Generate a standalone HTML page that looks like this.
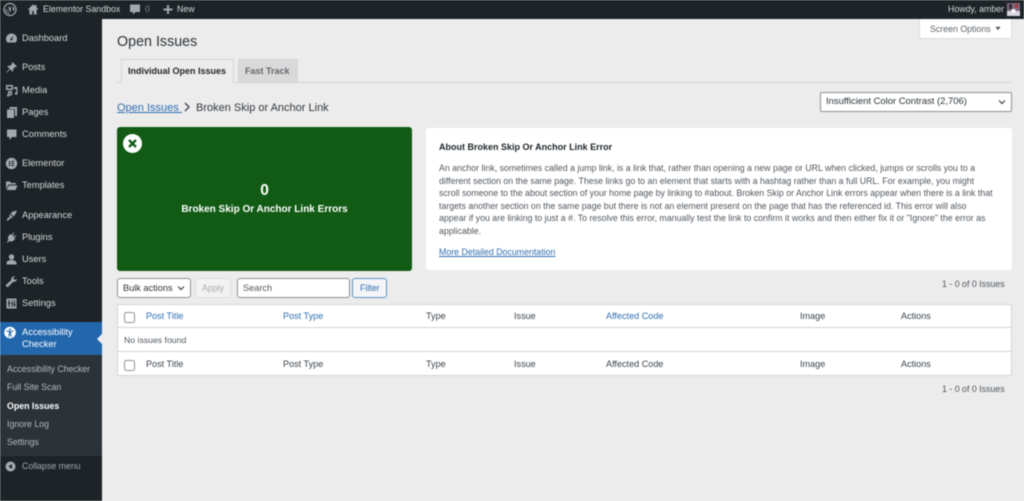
<!DOCTYPE html>
<html lang="en"><head><meta charset="utf-8"><title>Open Issues</title>
<style>
html,body{margin:0;padding:0;width:1024px;height:501px;overflow:hidden;background:#ececec;font-family:"Liberation Sans",sans-serif;font-size:9px;color:#3c434a}
#w{position:absolute;left:0;top:0;width:1024px;height:501px;overflow:hidden;filter:blur(.4px)}
.t{position:absolute;white-space:nowrap;line-height:12px}
.b{position:absolute;box-sizing:border-box}
.m{color:#d5d8da;font-size:9.3px;left:22px}
.s{color:#b4b9be;font-size:8.8px;left:7px}
.i{position:absolute;left:5px;width:13px;height:13px;fill:#a4a9ae}
.bar{color:#d5d8da;font-size:8.8px}
.th{font-size:9.1px;color:#3c434a}
.link{color:#2f6eb0}
p{margin:0}
</style></head><body><div id="w">
<div class="b" style="left:0;top:0;width:1024px;height:19px;background:#1d2327"></div>
<div class="b" style="left:0;top:19px;width:102px;height:482px;background:#1d2327"></div>
<div class="b" style="left:0;top:355px;width:102px;height:101px;background:#2c3338"></div>

<!-- admin bar -->
<svg class="b" style="left:3px;top:2px;width:14px;height:15px" viewBox="0 0 14 14"><circle cx="7" cy="7" r="6" fill="none" stroke="#a4a9ae" stroke-width="1.2"/><path d="M3 4.500h3l-.5.500 1.600 5 1-3-.8-2.200-.5-.3h3L9.400 5l1.100 4.300.8-2.300c.3-1-.1-2-.9-2.700L3 4.500zM2.500 5.500l2.400 6.200-2.400-3zM4 5l2.300 6.800L5.500 12z" fill="#a4a9ae"/></svg>
<svg class="b" style="left:27px;top:3px;width:12px;height:13px" viewBox="0 0 12 12"><path d="M6 1 .8 6h1.600v5h2.800V7.600h1.600V11h2.800V6h1.600L9.500 3.600V1.500H8v.7z" fill="#a4a9ae"/></svg>
<div class="t bar" style="left:43px;top:3px">Elementor Sandbox</div>
<svg class="b" style="left:129px;top:3px;width:12px;height:13px" viewBox="0 0 12 12"><path d="M1 1h10v7.500H6.500L4 11V8.500H1z" fill="#a4a9ae"/></svg>
<div class="t" style="left:145px;top:3px;color:#7f8589;font-size:8.800px">0</div>
<svg class="b" style="left:162px;top:3px;width:12px;height:13px" viewBox="0 0 12 12"><path d="M5 1.500h2V5h3.500v2H7v3.500H5V7H1.500V5H5z" fill="#a4a9ae"/></svg>
<div class="t bar" style="left:177px;top:3px">New</div>
<div class="t bar" style="left:948px;top:3px">Howdy, amber</div>
<svg class="b" style="left:1007px;top:3px;width:13px;height:13px" viewBox="0 0 13 13"><rect width="13" height="13" fill="#7c6a80"/><rect y="8" width="13" height="5" fill="#d8d4de"/><rect x="2" y="1" width="3" height="5" fill="#3a2a3a"/><rect x="8" y="1" width="3" height="4" fill="#a03a4a"/><circle cx="6.500" cy="8" r="2" fill="#fff"/></svg>

<!-- side menu -->
<svg class="i" style="top:32px" viewBox="0 0 13 13"><path d="M6.500 1.500a5.500 5.500 0 0 0-5 7.800l1 1.200h8l1-1.200a5.500 5.500 0 0 0-5-7.800zM6 6.500 8.500 3.800 7.300 7.300a1 1 0 1 1-1.300-.8z"/></svg>
<div class="t m" style="top:32px">Dashboard</div>
<svg class="i" style="top:61px" viewBox="0 0 13 13"><path d="M7.500 1 12 5.500l-1 .6-.7-.3L8 8.200c.4 1 .3 1.800-.3 2.500L5.300 8.300 2 11.500l-.8.300.3-.8L4.700 7.700 2.300 5.300c.7-.6 1.500-.7 2.500-.3l2.400-2.300-.3-.7z"/></svg>
<div class="t m" style="top:61px">Posts</div>
<svg class="i" style="top:84px" viewBox="0 0 13 13"><path d="M1 1h7v5H1zM2.500 2.500v2h4v-2zM9 3h3.500v6.500a1.300 1.300 0 1 1-1.200-1.300V5H9zM3 7h4v3.500a1.200 1.200 0 1 1-1.200-1.200V8.500H4.300v3a1.200 1.200 0 1 1-1.300-1.200z"/></svg>
<div class="t m" style="top:84px">Media</div>
<svg class="i" style="top:106px" viewBox="0 0 13 13"><path d="M4.500 1H12v9H10V3H4.500zM2 3.500h7v8.500H2z"/></svg>
<div class="t m" style="top:106px">Pages</div>
<svg class="i" style="top:128px" viewBox="0 0 13 13"><path d="M2 1.500h9.500v7.500H7l-2.500 3V9H2z"/></svg>
<div class="t m" style="top:128px">Comments</div>
<svg class="i" style="top:157px" viewBox="0 0 13 13"><path fill-rule="evenodd" d="M6.500.8a5.700 5.700 0 1 1 0 11.400 5.700 5.700 0 0 1 0-11.400zM4 4v5h1V4zm2.200 0v1h3V4zm0 2v1h3V6zm0 2v1h3V8z"/></svg>
<div class="t m" style="top:157px">Elementor</div>
<svg class="i" style="top:179px" viewBox="0 0 13 13"><path d="M1 2.500h4l1 1.500h5v1.500H3.500L1 10zM4 6.500h8.500L10.500 11H1.500z"/></svg>
<div class="t m" style="top:179px">Templates</div>
<svg class="i" style="top:209px" viewBox="0 0 13 13"><path d="M12 1.500 8 2.500 5.500 4.500 8.500 7.500 10.500 5zM4.800 5.200 7.800 8.200 6.800 9.200 5.800 8.700 4 11l-2.500 1 1-2.500 2.300-1.800-.5-1z"/></svg>
<div class="t m" style="top:209px">Appearance</div>
<svg class="i" style="top:231px" viewBox="0 0 13 13"><path d="M8.500 1.500 7 4 5.500 3l-2 2c-.8 1-.8 2.500 0 3.500L1.500 12l3.500-2c1 .7 2.300.6 3.300-.2l2-2L9 6.500 11.500 5 10.700 4.200 8.600 5.500 7.800 4.800 9.300 2.300z"/></svg>
<div class="t m" style="top:231px">Plugins</div>
<svg class="i" style="top:253px" viewBox="0 0 13 13"><circle cx="6.500" cy="4" r="2.700"/><path d="M1.500 11.500V10c0-1.800 2.500-3 5-3s5 1.200 5 3v1.500z"/></svg>
<div class="t m" style="top:253px">Users</div>
<svg class="i" style="top:275px" viewBox="0 0 13 13"><path d="M12 3.500c0 2-1.700 3.700-3.800 3.300L3 12l-2-.5L.8 10l5.400-4.700C5.800 3 7.800 1 10 1.200L8.300 3 9 4.500l1.500.5z"/></svg>
<div class="t m" style="top:275px">Tools</div>
<svg class="i" style="top:297px" viewBox="0 0 13 13"><path fill-rule="evenodd" d="M1.500 1.500h10v10h-10zM3.500 3v2.500H3V7h.5v3h1V7H5V5.500h-.5V3zM6 5v1.500h.5v3.500h1V6.500H8V5zM9 3v4h-.5v1.500H9V10h1V8.500h.5V7H10V3zM6.500 3v1h1V3z"/></svg>
<div class="t m" style="top:297px">Settings</div>

<div class="b" style="left:0;top:322px;width:102px;height:33px;background:#2267ac"></div>
<svg class="b" style="left:97px;top:334px;width:5px;height:10px" viewBox="0 0 5 10"><path d="M5 0v10L0 5z" fill="#ececec"/></svg>
<svg class="b" style="left:4px;top:326px;width:12px;height:13px" viewBox="0 0 12 12"><path fill-rule="evenodd" d="M6 .2a5.800 5.800 0 1 1 0 11.600A5.800 5.800 0 0 1 6 .2zM6 2a1 1 0 1 0 0 2 1 1 0 0 0 0-2zM2.500 4v1l2.500.6v1.400L4 10.200l1 .3L6 7.500l1 3 1-.3-1-3.200V5.600L9.500 5V4L6 4.600z" fill="#fff"/></svg>
<div class="t m" style="top:326px;color:#fff">Accessibility</div>
<div class="t m" style="top:338px;color:#fff">Checker</div>

<div class="t s" style="top:363px">Accessibility Checker</div>
<div class="t s" style="top:381px">Full Site Scan</div>
<div class="t s" style="top:400px;color:#fff;font-weight:bold">Open Issues</div>
<div class="t s" style="top:418px">Ignore Log</div>
<div class="t s" style="top:436px">Settings</div>
<svg class="b" style="left:5px;top:461px;width:11px;height:11px" viewBox="0 0 11 11"><circle cx="5.500" cy="5.500" r="5" fill="#a4a9ae"/><path d="M7 3v5L3.500 5.500z" fill="#1d2327"/></svg>
<div class="t s" style="left:22px;top:460px;color:#a4a9ae">Collapse menu</div>

<!-- main -->
<div class="t" style="left:117px;top:33px;font-size:14.300px;line-height:18px;color:#2c3338">Open Issues</div>
<div class="b" style="left:919px;top:19px;width:93px;height:20px;background:#fff;border:1px solid #dcdcde;border-top:0;border-radius:0 0 3px 3px"></div>
<div class="t" style="left:930px;top:23px;font-size:8.800px;color:#5d6368">Screen Options</div>
<svg class="b" style="left:995px;top:26px;width:6px;height:5px" viewBox="0 0 7 5"><path d="M.5.500h6L3.500 4.500z" fill="#50575e"/></svg>

<div class="b" style="left:117px;top:82px;width:895px;height:1px;background:#d3d4d6"></div>
<div class="b" style="left:121px;top:59px;width:113px;height:24px;background:#ececec;border:1px solid #d3d4d6;border-bottom:0"></div>
<div class="t" style="left:128px;top:65px;font-size:9px;font-weight:bold;color:#1d2327">Individual Open Issues</div>
<div class="b" style="left:238px;top:59px;width:60px;height:23px;background:#d9d9da;border:1px solid #d3d4d6;border-bottom:0"></div>
<div class="t" style="left:245px;top:65px;font-size:9px;font-weight:bold;color:#62686d">Fast Track</div>

<div class="t link" style="left:117px;top:100.500px;font-size:11px;line-height:14px;text-decoration:underline">Open Issues&nbsp;</div>
<svg class="b" style="left:183px;top:102px;width:8px;height:10px" viewBox="0 0 8 10"><path d="M2 1l4 4-4 4" fill="none" stroke="#3c434a" stroke-width="1.300"/></svg>
<div class="t" style="left:196px;top:100.500px;font-size:11px;line-height:14px;color:#32373c">Broken Skip or Anchor Link</div>

<div class="b" style="left:820px;top:92px;width:192px;height:20px;background:#fff;border:1px solid #8c8f94;border-radius:2px"></div>
<div class="t" style="left:826px;top:96px;font-size:9.450px;color:#2c3338">Insufficient Color Contrast (2,706)</div>
<svg class="b" style="left:998px;top:99px;width:8px;height:6px" viewBox="0 0 8 6"><path d="M1 1.500l3 3 3-3" fill="none" stroke="#3c434a" stroke-width="1.200"/></svg>

<!-- green -->
<div class="b" style="left:117px;top:127px;width:295px;height:144px;background:#125b15;border-radius:3px"></div>
<svg class="b" style="left:123px;top:134px;width:19px;height:19px" viewBox="0 0 19 19"><circle cx="9.500" cy="9.500" r="9.500" fill="#fff"/><path d="M6 6l7 7M13 6l-7 7" stroke="#125b15" stroke-width="2.300" fill="none"/></svg>
<div class="t" style="left:117px;width:295px;text-align:center;top:182px;font-size:15.500px;line-height:18px;font-weight:bold;color:#fff">0</div>
<div class="t" style="left:117px;width:295px;text-align:center;top:203.500px;font-size:10px;font-weight:bold;color:#fff">Broken Skip Or Anchor Link Errors</div>

<!-- about -->
<div class="b" style="left:426px;top:128px;width:586px;height:142px;background:#fff;border-radius:3px"></div>
<div class="t" style="left:439px;top:141px;font-size:9px;font-weight:bold;color:#1d2327">About Broken Skip Or Anchor Link Error</div>
<div class="t" style="left:439px;top:162px;font-size:8.800px;line-height:12.600px;color:#50575e">An anchor link, sometimes called a jump link, is a link that, rather than opening a new page or URL when clicked, jumps or scrolls you to a<br>different section on the same page. These links go to an element that starts with a hashtag rather than a full URL. For example, you might<br>scroll someone to the about section of your home page by linking to #about. Broken Skip or Anchor Link errors appear when there is a link that<br>targets another section on the same page but there is not an element present on the page that has the referenced id. This error will also<br>appear if you are linking to just a #. To resolve this error, manually test the link to confirm it works and then either fix it or "Ignore" the error as<br>applicable.</div>
<div class="t link" style="left:439px;top:246px;font-size:8.800px;text-decoration:underline">More Detailed Documentation</div>

<!-- toolbar -->
<div class="b" style="left:117px;top:278px;width:74px;height:20px;background:#fff;border:1px solid #8c8f94;border-radius:3px"></div>
<div class="t" style="left:123px;top:282px;font-size:9.200px;color:#2c3338">Bulk actions</div>
<svg class="b" style="left:177px;top:285px;width:8px;height:6px" viewBox="0 0 8 6"><path d="M1 1.500l3 3 3-3" fill="none" stroke="#3c434a" stroke-width="1.200"/></svg>
<div class="b" style="left:195px;top:278px;width:36px;height:20px;background:#f2f2f3;border:1px solid #dcdcde;border-radius:3px"></div>
<div class="t" style="left:202px;top:282px;font-size:8.800px;color:#a7aaad">Apply</div>
<div class="b" style="left:237px;top:278px;width:113px;height:20px;background:#fff;border:1px solid #8c8f94;border-radius:3px"></div>
<div class="t" style="left:243px;top:282px;font-size:9.200px;color:#50575e">Search</div>
<div class="b" style="left:352px;top:278px;width:35px;height:20px;background:#f3f5f6;border:1px solid #5f93c6;border-radius:3px"></div>
<div class="t link" style="left:360px;top:282px;font-size:8.800px">Filter</div>
<div class="t" style="left:942px;top:278px;font-size:8.800px;color:#50575e">1 - 0 of 0 Issues</div>

<!-- table -->
<div class="b" style="left:117px;top:304px;width:895px;height:72px;background:#fff;border:1px solid #d3d4d6"></div>
<div class="b" style="left:118px;top:327px;width:893px;height:1px;background:#d3d4d6"></div>
<div class="b" style="left:118px;top:351px;width:893px;height:1px;background:#d3d4d6"></div>
<div class="b" style="left:124px;top:312px;width:11px;height:11px;background:#fff;border:1px solid #8c8f94;border-radius:2.500px"></div>
<div class="b" style="left:124px;top:360px;width:11px;height:11px;background:#fff;border:1px solid #8c8f94;border-radius:2.500px"></div>

<div class="t th link" style="left:146px;top:310px">Post Title</div>
<div class="t th link" style="left:283px;top:310px">Post Type</div>
<div class="t th" style="left:426px;top:310px">Type</div>
<div class="t th" style="left:514px;top:310px">Issue</div>
<div class="t th link" style="left:606px;top:310px">Affected Code</div>
<div class="t th" style="left:800px;top:310px">Image</div>
<div class="t th" style="left:901px;top:310px">Actions</div>

<div class="t" style="left:124px;top:334px;font-size:8.700px;color:#50575e">No issues found</div>

<div class="t th" style="left:146px;top:358px">Post Title</div>
<div class="t th" style="left:283px;top:358px">Post Type</div>
<div class="t th" style="left:426px;top:358px">Type</div>
<div class="t th" style="left:514px;top:358px">Issue</div>
<div class="t th" style="left:606px;top:358px">Affected Code</div>
<div class="t th" style="left:800px;top:358px">Image</div>
<div class="t th" style="left:901px;top:358px">Actions</div>

<div class="t" style="left:942px;top:383px;font-size:8.800px;color:#50575e">1 - 0 of 0 Issues</div>
</div></body></html>
